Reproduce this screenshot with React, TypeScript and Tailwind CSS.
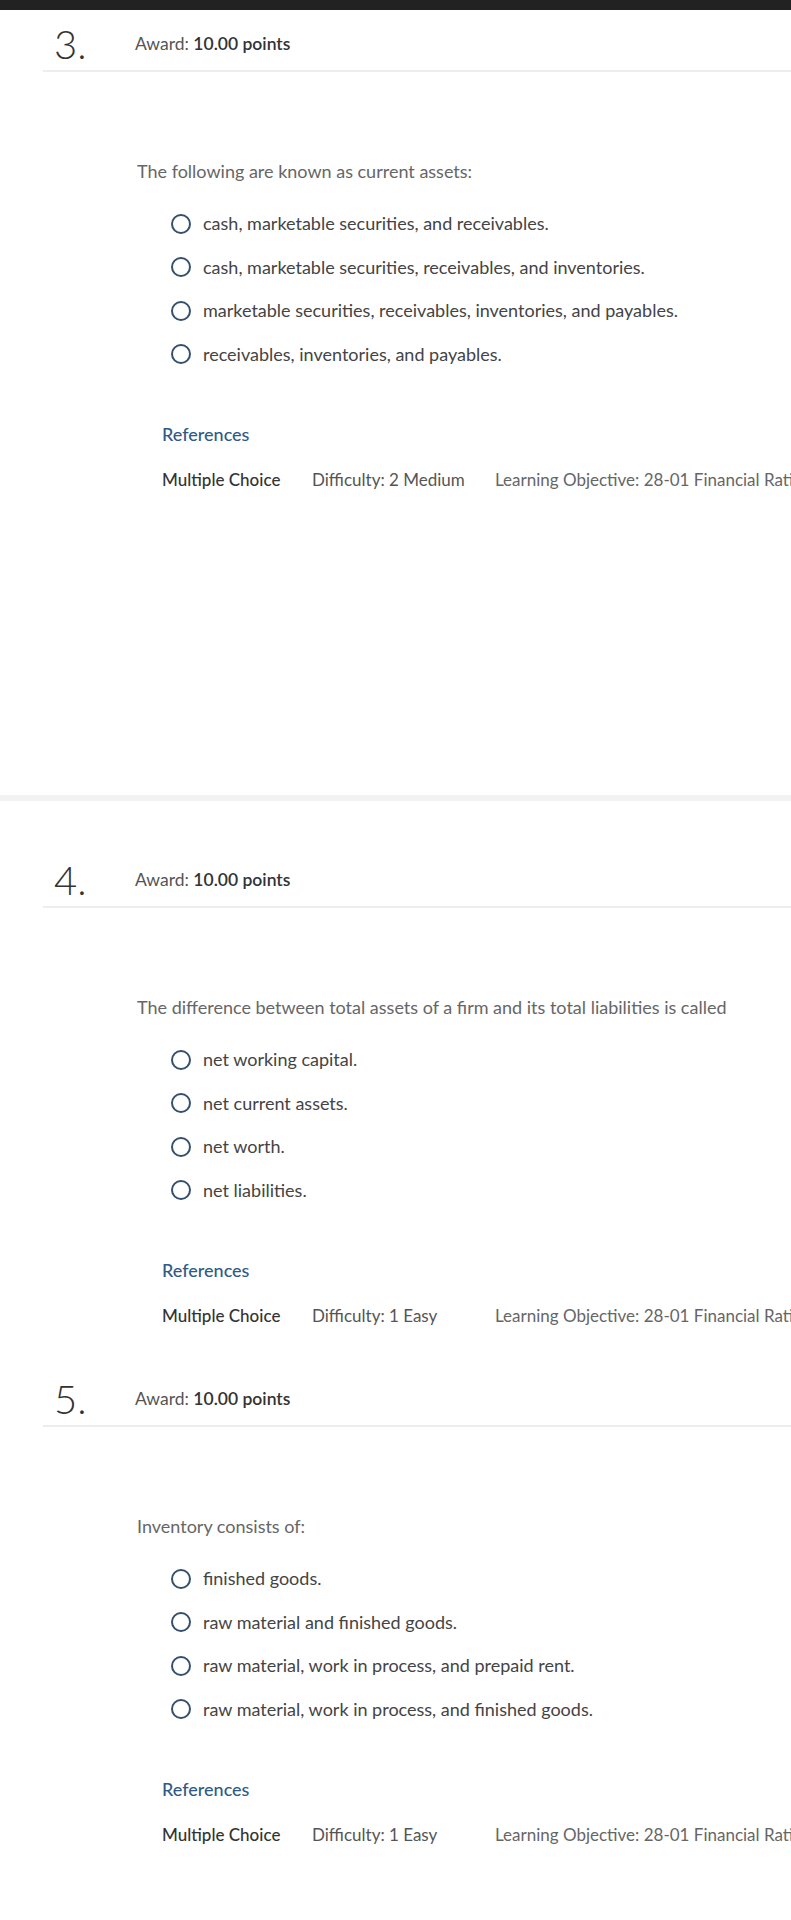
const font = { fontFamily: 'Lato, "Liberation Sans", sans-serif' };

type Q = {
  num: number;
  text: string;
  options: string[];
  difficulty: string;
};

const questions: Q[] = [
  {
    num: 3,
    text: 'The following are known as current assets:',
    options: [
      'cash, marketable securities, and receivables.',
      'cash, marketable securities, receivables, and inventories.',
      'marketable securities, receivables, inventories, and payables.',
      'receivables, inventories, and payables.',
    ],
    difficulty: 'Difficulty: 2 Medium',
  },
  {
    num: 4,
    text: 'The difference between total assets of a firm and its total liabilities is called',
    options: ['net working capital.', 'net current assets.', 'net worth.', 'net liabilities.'],
    difficulty: 'Difficulty: 1 Easy',
  },
  {
    num: 5,
    text: 'Inventory consists of:',
    options: [
      'finished goods.',
      'raw material and finished goods.',
      'raw material, work in process, and prepaid rent.',
      'raw material, work in process, and finished goods.',
    ],
    difficulty: 'Difficulty: 1 Easy',
  },
];

function Question({ q }: { q: Q }) {
  return (
    <section>
      {/* header: number + award */}
      <div className="ml-[43px] flex h-[62px] items-center border-b-2 border-[#ededed] pt-2">
        <div className="w-[92px] pl-[11px] text-[40px] font-light leading-none text-[#333]">{q.num}.</div>
        <div className="text-[17.5px] text-[#555]">
          Award: <span className="font-semibold text-[#333]">10.00 points</span>
        </div>
      </div>

      <div className="ml-[137px]">
        <p className="mt-[89px] text-[18px] leading-[20px] text-[#666]">{q.text}</p>

        <ul className="mt-[21px]">
          {q.options.map((o) => (
            <li key={o} className="flex h-[43.5px] items-center">
              <span className="ml-[34px] h-[20px] w-[20px] shrink-0 rounded-full border-[2.5px] border-[#34506e]" />
              <span className="ml-[12px] text-[18px] text-[#444]">{o}</span>
            </li>
          ))}
        </ul>

        <div className="ml-[25px] mt-[48px] text-[18px] font-medium leading-[20px] text-[#2f5a85]">References</div>

        <div className="ml-[25px] mt-[26px] flex whitespace-nowrap text-[17px] leading-[20px]">
          <span className="w-[150px] shrink-0 font-medium text-[#333]">Multiple Choice</span>
          <span className="w-[183px] shrink-0 text-[#555]">{q.difficulty}</span>
          <span className="shrink-0 text-[#666]">Learning Objective: 28-01 Financial Ratios</span>
        </div>
      </div>
    </section>
  );
}

export default function App() {
  return (
    <div style={font} className="w-[791px] min-h-[1920px] overflow-hidden bg-white">
      <div className="h-[10px] bg-[#222]" />

      <Question q={questions[0]} />

      <div className="mt-[305px] h-[6px] bg-[#f2f2f2]" />

      <div className="pt-[45px]">
        <Question q={questions[1]} />
      </div>

      <div className="pt-[39px]">
        <Question q={questions[2]} />
      </div>
    </div>
  );
}
